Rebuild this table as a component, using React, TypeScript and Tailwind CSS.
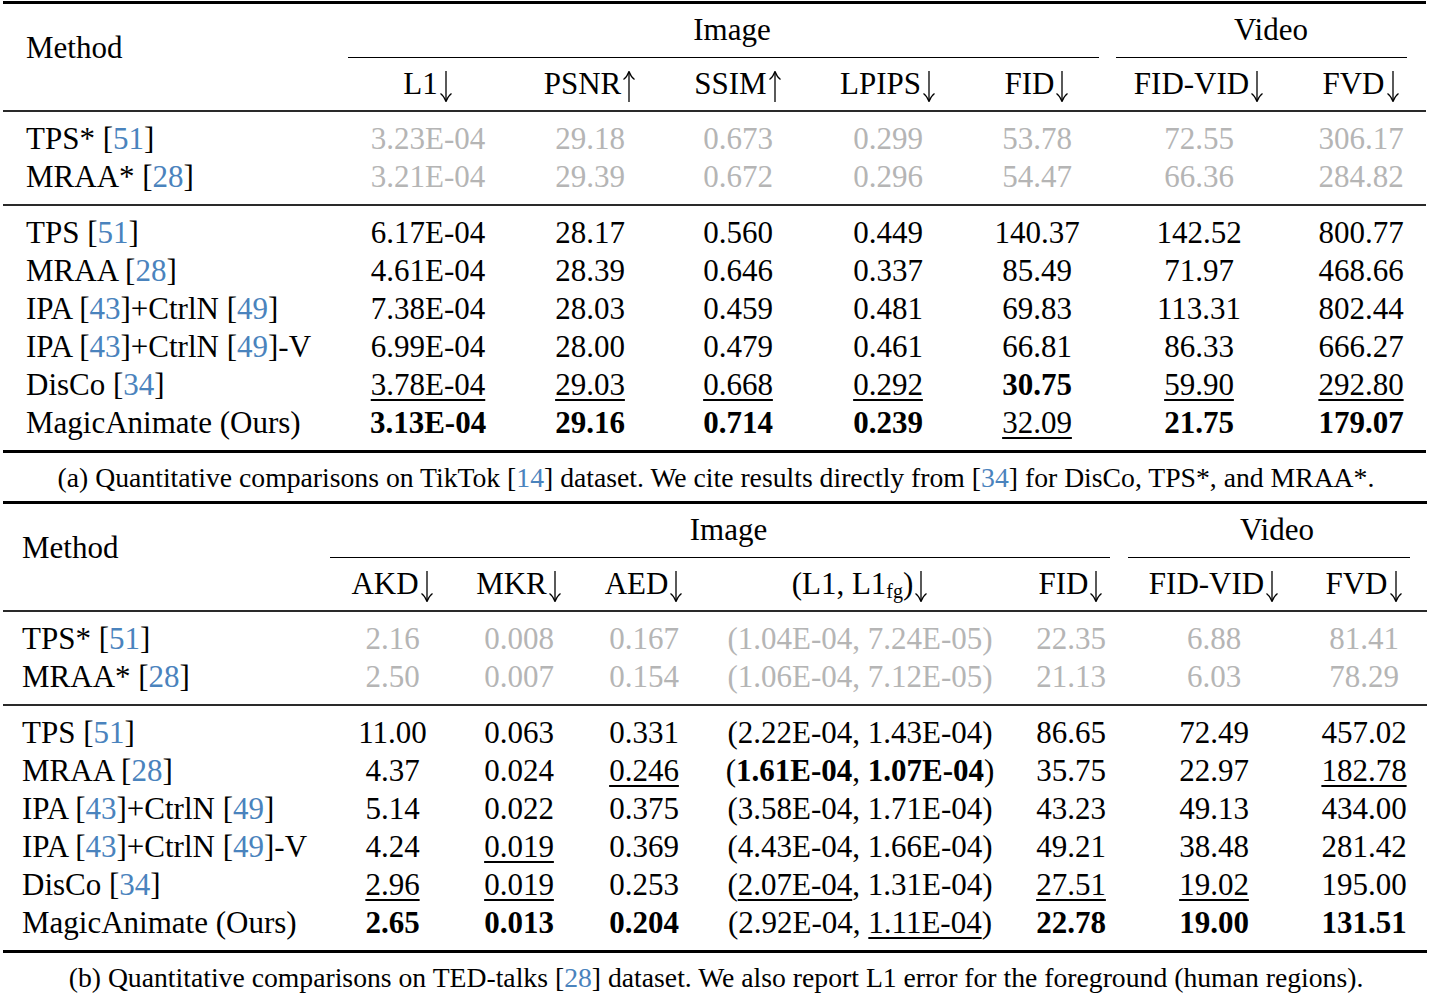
import type { ReactNode } from 'react'

const T1 = 'grid grid-cols-[345px_160px_164px_132px_168px_130px_194px_130px]'
const T2 = 'grid grid-cols-[327px_125px_128px_122px_310px_112px_174px_126px]'

const cite = (n: number) => (
  <>
    [<span className="text-[#4a83bd]">{n}</span>]
  </>
)

const B = ({ children }: { children: ReactNode }) => <span className="font-bold">{children}</span>
const U = ({ children }: { children: ReactNode }) => (
  <span className="underline decoration-[1.5px] underline-offset-[4px]">{children}</span>
)

// thin LaTeX-style arrows
const Down = () => (
  <svg viewBox="0 0 14 31" className="inline-block w-[14px] h-[31px] align-[-8px] ml-[1px]" fill="none" stroke="black" strokeWidth="1.3">
    <path d="M7 0 V30" />
    <path d="M1.5 22.5 Q5 25 7 30.5 Q9 25 12.5 22.5" />
  </svg>
)
const Up = () => (
  <svg viewBox="0 0 14 31" className="inline-block w-[14px] h-[31px] align-[-8px] ml-[1px]" fill="none" stroke="black" strokeWidth="1.3">
    <path d="M7 1 V31" />
    <path d="M1.5 8.5 Q5 6 7 0.5 Q9 6 12.5 8.5" />
  </svg>
)

interface Row {
  method: ReactNode
  values: ReactNode[]
}

function Body({ grid, rows, pad, faded }: { grid: string; rows: Row[]; pad: string; faded?: boolean }) {
  return (
    <div className={`${grid} py-[8px]`}>
      {rows.map((r, i) => (
        <div key={i} className="contents">
          <div className={`${pad} h-[38px] leading-[38px] whitespace-nowrap`}>{r.method}</div>
          {r.values.map((v, j) => (
            <div
              key={j}
              className={`h-[38px] leading-[38px] text-center whitespace-nowrap ${faded ? 'text-[#b5b5b5]' : ''}`}
            >
              {v}
            </div>
          ))}
        </div>
      ))}
    </div>
  )
}

const Thick = () => <div className="h-[3px] bg-black" />
const Thin = () => <div className="h-[2px] bg-[#2a2a2a]" />

const Head = ({ children }: { children: ReactNode }) => (
  <div className="h-[38px] leading-[38px] text-center whitespace-nowrap">{children}</div>
)

const starRows1: Row[] = [
  { method: <>TPS* {cite(51)}</>, values: ['3.23E-04', '29.18', '0.673', '0.299', '53.78', '72.55', '306.17'] },
  { method: <>MRAA* {cite(28)}</>, values: ['3.21E-04', '29.39', '0.672', '0.296', '54.47', '66.36', '284.82'] },
]

const rows1: Row[] = [
  { method: <>TPS {cite(51)}</>, values: ['6.17E-04', '28.17', '0.560', '0.449', '140.37', '142.52', '800.77'] },
  { method: <>MRAA {cite(28)}</>, values: ['4.61E-04', '28.39', '0.646', '0.337', '85.49', '71.97', '468.66'] },
  {
    method: <>IPA {cite(43)}+CtrlN {cite(49)}</>,
    values: ['7.38E-04', '28.03', '0.459', '0.481', '69.83', '113.31', '802.44'],
  },
  {
    method: <>IPA {cite(43)}+CtrlN {cite(49)}-V</>,
    values: ['6.99E-04', '28.00', '0.479', '0.461', '66.81', '86.33', '666.27'],
  },
  {
    method: <>DisCo {cite(34)}</>,
    values: [
      <U>3.78E-04</U>,
      <U>29.03</U>,
      <U>0.668</U>,
      <U>0.292</U>,
      <B>30.75</B>,
      <U>59.90</U>,
      <U>292.80</U>,
    ],
  },
  {
    method: 'MagicAnimate (Ours)',
    values: [
      <B>3.13E-04</B>,
      <B>29.16</B>,
      <B>0.714</B>,
      <B>0.239</B>,
      <U>32.09</U>,
      <B>21.75</B>,
      <B>179.07</B>,
    ],
  },
]

const starRows2: Row[] = [
  { method: <>TPS* {cite(51)}</>, values: ['2.16', '0.008', '0.167', '(1.04E-04, 7.24E-05)', '22.35', '6.88', '81.41'] },
  { method: <>MRAA* {cite(28)}</>, values: ['2.50', '0.007', '0.154', '(1.06E-04, 7.12E-05)', '21.13', '6.03', '78.29'] },
]

const rows2: Row[] = [
  { method: <>TPS {cite(51)}</>, values: ['11.00', '0.063', '0.331', '(2.22E-04, 1.43E-04)', '86.65', '72.49', '457.02'] },
  {
    method: <>MRAA {cite(28)}</>,
    values: [
      '4.37',
      '0.024',
      <U>0.246</U>,
      <>
        (<B>1.61E-04</B>, <B>1.07E-04</B>)
      </>,
      '35.75',
      '22.97',
      <U>182.78</U>,
    ],
  },
  {
    method: <>IPA {cite(43)}+CtrlN {cite(49)}</>,
    values: ['5.14', '0.022', '0.375', '(3.58E-04, 1.71E-04)', '43.23', '49.13', '434.00'],
  },
  {
    method: <>IPA {cite(43)}+CtrlN {cite(49)}-V</>,
    values: ['4.24', <U>0.019</U>, '0.369', '(4.43E-04, 1.66E-04)', '49.21', '38.48', '281.42'],
  },
  {
    method: <>DisCo {cite(34)}</>,
    values: [
      <U>2.96</U>,
      <U>0.019</U>,
      '0.253',
      <>
        (<U>2.07E-04</U>, 1.31E-04)
      </>,
      <U>27.51</U>,
      <U>19.02</U>,
      '195.00',
    ],
  },
  {
    method: 'MagicAnimate (Ours)',
    values: [
      <B>2.65</B>,
      <B>0.013</B>,
      <B>0.204</B>,
      <>
        (2.92E-04, <U>1.11E-04</U>)
      </>,
      <B>22.78</B>,
      <B>19.00</B>,
      <B>131.51</B>,
    ],
  },
]

export default function App() {
  return (
    <div className="w-[1432px] h-[993px] bg-white text-black font-['Liberation_Serif','Times_New_Roman',serif] text-[31px] overflow-hidden">
      {/* Table (a) */}
      <div className="ml-[3px] w-[1423px] pt-[1px]">
        <Thick />
        <div className={`${T1} pt-[7px] pb-[7px]`}>
          <div className="row-span-3 pl-[23px] pt-[18px] leading-[38px]">Method</div>
          <div className="col-span-5 h-[38px] leading-[38px] text-center pl-[14px]">Image</div>
          <div className="col-span-2 h-[38px] leading-[38px] text-center pl-[14px]">Video</div>
          <div className="col-span-5 mr-[3px] mt-[8px] mb-[7px] h-[1px] bg-black" />
          <div className="col-span-2 ml-[14px] mr-[19px] mt-[8px] mb-[7px] h-[1px] bg-black" />
          <Head>L1<Down /></Head>
          <Head>PSNR<Up /></Head>
          <Head>SSIM<Up /></Head>
          <Head>LPIPS<Down /></Head>
          <Head>FID<Down /></Head>
          <Head>FID-VID<Down /></Head>
          <Head>FVD<Down /></Head>
        </div>
        <Thin />
        <Body grid={T1} rows={starRows1} pad="pl-[23px]" faded />
        <Thin />
        <Body grid={T1} rows={rows1} pad="pl-[23px]" />
        <Thick />
      </div>
      <p className="mt-[10px] h-[30px] leading-[30px] text-[27.7px] text-center whitespace-nowrap">
        (a) Quantitative comparisons on TikTok {cite(14)} dataset. We cite results directly from {cite(34)} for DisCo,
        TPS*, and MRAA*.
      </p>

      {/* Table (b) */}
      <div className="ml-[3px] w-[1424px] mt-[8px]">
        <Thick />
        <div className={`${T2} pt-[7px] pb-[7px]`}>
          <div className="row-span-3 pl-[19px] pt-[18px] leading-[38px]">Method</div>
          <div className="col-span-5 h-[38px] leading-[38px] text-center">Image</div>
          <div className="col-span-2 h-[38px] leading-[38px] text-center">Video</div>
          <div className="col-span-5 mr-[17px] mt-[8px] mb-[7px] h-[1px] bg-black" />
          <div className="col-span-2 ml-[1px] mr-[17px] mt-[8px] mb-[7px] h-[1px] bg-black" />
          <Head>AKD<Down /></Head>
          <Head>MKR<Down /></Head>
          <Head>AED<Down /></Head>
          <Head>
            (L1, L1<span className="text-[20px] align-[-4px]">fg</span>)<Down />
          </Head>
          <Head>FID<Down /></Head>
          <Head>FID-VID<Down /></Head>
          <Head>FVD<Down /></Head>
        </div>
        <Thin />
        <Body grid={T2} rows={starRows2} pad="pl-[19px]" faded />
        <Thin />
        <Body grid={T2} rows={rows2} pad="pl-[19px]" />
        <Thick />
      </div>
      <p className="mt-[10px] h-[30px] leading-[30px] text-[27.7px] text-center whitespace-nowrap">
        (b) Quantitative comparisons on TED-talks {cite(28)} dataset. We also report L1 error for the foreground (human
        regions).
      </p>
    </div>
  )
}
